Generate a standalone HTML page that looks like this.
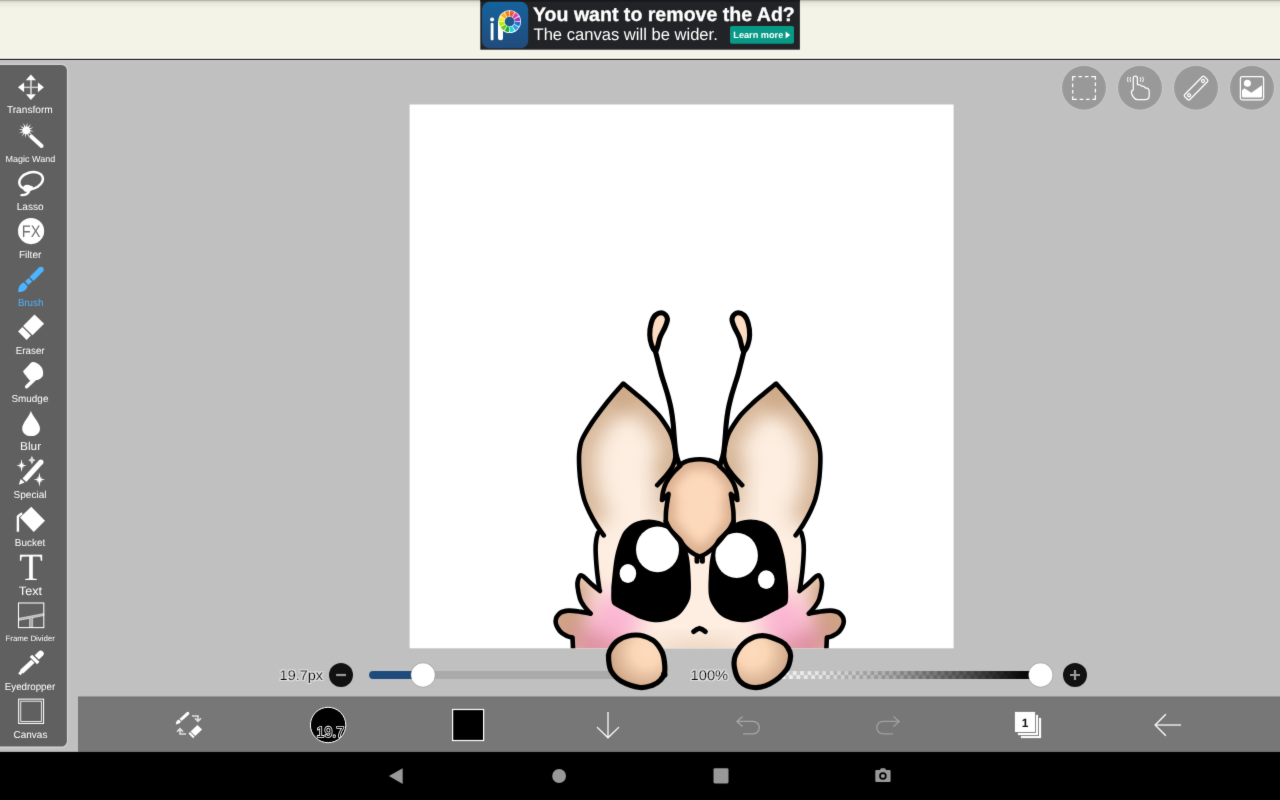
<!DOCTYPE html>
<html lang="en">
<head>
<meta charset="utf-8">
<title>ibisPaint</title>
<style>
*{box-sizing:border-box;margin:0;padding:0}
html,body{width:1280px;height:800px;overflow:hidden;background:#c0c0c0;font-family:"Liberation Sans",sans-serif}
#app{position:relative;width:1280px;height:800px;overflow:hidden;background:#c0c0c0}
#app>svg{position:absolute;left:0;top:0;width:1280px;height:800px;display:block}
text{white-space:pre;text-rendering:geometricPrecision}
</style>
</head>
<body>
<div id="app">
<svg width="1280" height="800" viewBox="0 0 1280 800">
<defs><filter id="soft" filterUnits="userSpaceOnUse" x="0" y="0" width="1280" height="800" color-interpolation-filters="sRGB"><feConvolveMatrix order="3" kernelMatrix="0.01 0.07 0.01 0.07 0.68 0.07 0.01 0.07 0.01" edgeMode="duplicate" preserveAlpha="true"/></filter></defs>
<g filter="url(#soft)">
<!-- workspace -->
<rect width="1280" height="800" fill="#c0c0c0"/>
<!-- canvas -->
<rect x="409.6" y="104.5" width="544" height="543.8" fill="#fff"/>
<!-- sliders -->
<defs><pattern id="chk" x="741" y="671.1" width="7.4" height="8" patternUnits="userSpaceOnUse"><rect width="7.4" height="8" fill="#fff"/><rect x="3.7" width="3.7" height="4" fill="#d6d6d6"/><rect y="4" width="3.7" height="4" fill="#d6d6d6"/></pattern>
<linearGradient id="opg" x1="741" x2="1040" y1="0" y2="0" gradientUnits="userSpaceOnUse"><stop offset="0" stop-color="#000" stop-opacity="0"/><stop offset="0.25" stop-color="#000" stop-opacity=".1"/><stop offset="0.5" stop-color="#000" stop-opacity=".33"/><stop offset="0.75" stop-color="#000" stop-opacity=".66"/><stop offset="0.93" stop-color="#000" stop-opacity=".95"/><stop offset="1" stop-color="#000" stop-opacity="1"/></linearGradient></defs>
<rect x="369.1" y="671.1" width="282" height="8" rx="4" fill="#aaa"/>
<rect x="369.1" y="671.1" width="60" height="8" rx="4" fill="#1f4b7c"/>
<rect x="741" y="671.1" width="310" height="8" rx="4" fill="url(#chk)"/>
<rect x="741" y="671.1" width="310" height="8" rx="4" fill="url(#opg)"/>
<circle cx="341" cy="675" r="12" fill="#111"/><rect x="336.1" y="673.9" width="9.9" height="2.2" fill="#9a9a9a"/>
<circle cx="1075" cy="675" r="12" fill="#111"/><path d="M1070 675H1080M1075 670V680" stroke="#9a9a9a" stroke-width="2.2" fill="none"/>
<circle cx="423" cy="675" r="12.4" fill="#8e8e8e" opacity=".6"/><circle cx="423" cy="675" r="11.8" fill="#fff"/>
<circle cx="1040.6" cy="675" r="12.4" fill="#8e8e8e" opacity=".6"/><circle cx="1040.6" cy="675" r="11.8" fill="#fff"/>
<defs><filter id="halo" x="-10%" y="-30%" width="120%" height="160%"><feMorphology in="SourceAlpha" operator="dilate" radius="0.6" result="d"/><feGaussianBlur in="d" stdDeviation="0.45" result="db"/><feFlood flood-color="#fff" flood-opacity=".55"/><feComposite in2="db" operator="in" result="h"/><feMerge><feMergeNode in="h"/><feMergeNode in="SourceGraphic"/></feMerge></filter></defs>
<g font-family="'Liberation Sans',sans-serif" font-size="14" fill="#000" stroke="#000" stroke-width=".18" filter="url(#halo)">
<text x="279.6" y="679.8" textLength="43.4" lengthAdjust="spacingAndGlyphs">19.7px</text>
<text x="690.6" y="679.8" textLength="37.6" lengthAdjust="spacingAndGlyphs">100%</text>
</g>
<!-- drawing -->
<defs>
<clipPath id="cv"><rect x="409.6" y="104.5" width="544" height="543.8"/></clipPath>
<clipPath id="bodyclip"><path d="M699.7 470L678 468L675.3 457.5L674.4 446.6L671.6 435.6L667.2 427.3L658.4 414.8L647.5 403.9L636.6 394.5L623.3 383.6L612.5 395.8L601.6 409.4L590.6 424.7L581.9 440L579.2 453.1L579.3 468.4L580.8 483.75L584.1 499.1L589.5 512.2L596.1 524.2L597.5 529L596.25 540L595.6 550L596.9 570L599.4 589.5L592 584.5L584 577L580.6 575.3L578 580L577.5 586.25L580 598.75L584 606L590.5 613.6L581.25 611.9L568.75 610.6L560 613.1L555.6 621.25L560 631.25L567.5 636.25L572.5 637.5L573.1 652L699.7 652L826.3 652L826.9 637.5L831.9 636.25L839.4 631.25L843.8 621.25L839.4 613.1L830.65 610.6L818.15 611.9L808.9 613.6L815.4 606L819.4 598.75L821.9 586.25L821.4 580L818.8 575.3L815.4 577L807.4 584.5L800 589.5L802.5 570L803.8 550L803.15 540L801.9 529L803.3 524.2L809.9 512.2L815.3 499.1L818.6 483.75L820.1 468.4L820.2 453.1L817.5 440L808.8 424.7L797.8 409.4L786.9 395.8L776.1 383.6L762.8 394.5L751.9 403.9L741 414.8L732.2 427.3L727.8 435.6L725 446.6L724.1 457.5L721.4 468Z"/></clipPath>
<filter id="b9" x="-30%" y="-30%" width="160%" height="160%"><feGaussianBlur stdDeviation="9.5"/></filter>
<filter id="b5" x="-30%" y="-30%" width="160%" height="160%"><feGaussianBlur stdDeviation="5.5"/></filter>
<filter id="b12" x="-50%" y="-50%" width="200%" height="200%"><feGaussianBlur stdDeviation="11"/></filter>
<linearGradient id="tuftg" x1="664" x2="735.4" y1="0" y2="0" gradientUnits="userSpaceOnUse"><stop offset="0" stop-color="#dfb99b"/><stop offset="0.18" stop-color="#e6c1a4"/><stop offset="0.5" stop-color="#fddabc"/><stop offset="0.82" stop-color="#e6c1a4"/><stop offset="1" stop-color="#dfb99b"/></linearGradient>
<radialGradient id="pawgL" cx="647" cy="652" r="40" gradientUnits="userSpaceOnUse"><stop offset="0" stop-color="#fedbbd"/><stop offset="0.35" stop-color="#fad6b7"/><stop offset="1" stop-color="#c9a282"/></radialGradient>
<radialGradient id="pawgR" cx="752.4" cy="652" r="40" gradientUnits="userSpaceOnUse"><stop offset="0" stop-color="#fedbbd"/><stop offset="0.35" stop-color="#fad6b7"/><stop offset="1" stop-color="#c9a282"/></radialGradient>
</defs>
<g clip-path="url(#cv)">
<path d="M699.7 470L678 468L675.3 457.5L674.4 446.6L671.6 435.6L667.2 427.3L658.4 414.8L647.5 403.9L636.6 394.5L623.3 383.6L612.5 395.8L601.6 409.4L590.6 424.7L581.9 440L579.2 453.1L579.3 468.4L580.8 483.75L584.1 499.1L589.5 512.2L596.1 524.2L597.5 529L596.25 540L595.6 550L596.9 570L599.4 589.5L592 584.5L584 577L580.6 575.3L578 580L577.5 586.25L580 598.75L584 606L590.5 613.6L581.25 611.9L568.75 610.6L560 613.1L555.6 621.25L560 631.25L567.5 636.25L572.5 637.5L573.1 652L699.7 652L826.3 652L826.9 637.5L831.9 636.25L839.4 631.25L843.8 621.25L839.4 613.1L830.65 610.6L818.15 611.9L808.9 613.6L815.4 606L819.4 598.75L821.9 586.25L821.4 580L818.8 575.3L815.4 577L807.4 584.5L800 589.5L802.5 570L803.8 550L803.15 540L801.9 529L803.3 524.2L809.9 512.2L815.3 499.1L818.6 483.75L820.1 468.4L820.2 453.1L817.5 440L808.8 424.7L797.8 409.4L786.9 395.8L776.1 383.6L762.8 394.5L751.9 403.9L741 414.8L732.2 427.3L727.8 435.6L725 446.6L724.1 457.5L721.4 468Z" fill="#fdeee1"/>
<g clip-path="url(#bodyclip)">
<g filter="url(#b9)" fill="none" stroke="#c8a27e" stroke-width="32" stroke-linejoin="round" opacity=".72">
<path d="M662.5 479.6C663.35 478.6 665.9 475.82 667.6 473.6C669.3 471.38 671.42 468.98 672.7 466.3C673.98 463.62 675.02 460.78 675.3 457.5C675.58 454.22 675.02 450.25 674.4 446.6C673.78 442.95 672.8 438.82 671.6 435.6C670.4 432.38 669.4 430.77 667.2 427.3C665 423.83 661.68 418.7 658.4 414.8C655.12 410.9 651.13 407.28 647.5 403.9C643.87 400.52 640.63 397.88 636.6 394.5C632.57 391.12 625.52 385.42 623.3 383.6C621.5 385.63 616.12 391.5 612.5 395.8C608.88 400.1 605.25 404.58 601.6 409.4C597.95 414.22 593.88 419.6 590.6 424.7C587.32 429.8 583.8 435.27 581.9 440C580 444.73 579.63 448.37 579.2 453.1C578.77 457.83 579.03 463.29 579.3 468.4C579.57 473.51 580 478.63 580.8 483.75C581.6 488.87 582.65 494.36 584.1 499.1C585.55 503.84 587.5 508.02 589.5 512.2C591.5 516.38 595 522.2 596.1 524.2"/><path d="M736.9 479.6C736.05 478.6 733.5 475.82 731.8 473.6C730.1 471.38 727.98 468.98 726.7 466.3C725.42 463.62 724.38 460.78 724.1 457.5C723.82 454.22 724.38 450.25 725 446.6C725.62 442.95 726.6 438.82 727.8 435.6C729 432.38 730 430.77 732.2 427.3C734.4 423.83 737.72 418.7 741 414.8C744.28 410.9 748.27 407.28 751.9 403.9C755.53 400.52 758.77 397.88 762.8 394.5C766.83 391.12 773.88 385.42 776.1 383.6C777.9 385.63 783.28 391.5 786.9 395.8C790.52 400.1 794.15 404.58 797.8 409.4C801.45 414.22 805.52 419.6 808.8 424.7C812.08 429.8 815.6 435.27 817.5 440C819.4 444.73 819.77 448.37 820.2 453.1C820.63 457.83 820.37 463.29 820.1 468.4C819.83 473.51 819.4 478.63 818.6 483.75C817.8 488.87 816.75 494.36 815.3 499.1C813.85 503.84 811.9 508.02 809.9 512.2C807.9 516.38 804.4 522.2 803.3 524.2"/>
</g>
<g filter="url(#b9)" fill="#c8a27e" opacity=".7">
<ellipse cx="623.3" cy="390" rx="17" ry="24"/><ellipse cx="776.1" cy="390" rx="17" ry="24"/>
</g>
<path d="M680 466L670 477L664 488L663 500L666 512L666 523M719.4 466L729.4 477L735.4 488L736.4 500L733.4 512L733.4 523" fill="none" stroke="#c8a27e" stroke-width="20" opacity=".55" filter="url(#b9)"/>
<g filter="url(#b9)" fill="#cfa385">
<ellipse cx="566" cy="619" rx="27" ry="36"/><ellipse cx="833.4" cy="619" rx="27" ry="36"/>
<ellipse cx="581" cy="590" rx="11" ry="19"/><ellipse cx="818.4" cy="590" rx="11" ry="19"/>
</g>
<ellipse cx="699.7" cy="652" rx="46" ry="14" fill="#d9b596" opacity=".4" filter="url(#b9)"/>
<g filter="url(#b12)">
<ellipse cx="600" cy="644" rx="30" ry="21" fill="#d88896"/><ellipse cx="799.4" cy="644" rx="30" ry="21" fill="#d88896"/>
<ellipse cx="616" cy="617" rx="27" ry="25" fill="#fbb6d2"/><ellipse cx="783.4" cy="617" rx="27" ry="25" fill="#fbb6d2"/>
</g>
</g>
<clipPath id="tuftclip"><path d="M699.7 459.2L690 460.3L684 462.3L679.6 465.2L672 474L666 483L663.5 492L664 498L667.2 502.5L666 512L665.8 522.5L669.3 528L677.3 538L685.5 547.3L693 553.4L699.7 556.6L706.4 553.4L713.9 547.3L722.1 538L730.1 528L733.6 522.5L733.4 512L732.2 502.5L735.4 498L735.9 492L733.4 483L727.4 474L719.8 465.2L715.4 462.3L709.4 460.3Z"/></clipPath>
<path d="M699.7 459.2L690 460.3L684 462.3L679.6 465.2L672 474L666 483L663.5 492L664 498L667.2 502.5L666 512L665.8 522.5L669.3 528L677.3 538L685.5 547.3L693 553.4L699.7 556.6L706.4 553.4L713.9 547.3L722.1 538L730.1 528L733.6 522.5L733.4 512L732.2 502.5L735.4 498L735.9 492L733.4 483L727.4 474L719.8 465.2L715.4 462.3L709.4 460.3Z" fill="#fdd9bb"/>
<g clip-path="url(#tuftclip)"><path d="M699.7 459.2L690 460.3L684 462.3L679.6 465.2L672 474L666 483L663.5 492L664 498L667.2 502.5L666 512L665.8 522.5L669.3 528L677.3 538L685.5 547.3L693 553.4L699.7 556.6L706.4 553.4L713.9 547.3L722.1 538L730.1 528L733.6 522.5L733.4 512L732.2 502.5L735.4 498L735.9 492L733.4 483L727.4 474L719.8 465.2L715.4 462.3L709.4 460.3Z" fill="none" stroke="#d0a585" stroke-width="19" stroke-linejoin="round" filter="url(#b5)" opacity=".8"/></g>
<path d="M663.1 313.1C665.07 313.73 667.08 316.39 667.4 318.75C667.72 321.11 666.23 324.12 665 327.25C663.77 330.38 661.25 334.23 660 337.5C658.75 340.77 658.27 344.65 657.5 346.9C656.73 349.15 656.38 351.32 655.4 351C654.42 350.68 652.54 347.67 651.6 345C650.66 342.33 649.81 338.65 649.75 335C649.69 331.35 650.27 326.43 651.25 323.1C652.23 319.77 653.62 316.67 655.6 315C657.58 313.33 661.13 312.48 663.1 313.1Z" fill="#fddcc1"/>
<path d="M736.3 313.1C734.33 313.73 732.32 316.39 732 318.75C731.68 321.11 733.17 324.12 734.4 327.25C735.63 330.38 738.15 334.23 739.4 337.5C740.65 340.77 741.13 344.65 741.9 346.9C742.67 349.15 743.02 351.32 744 351C744.98 350.68 746.86 347.67 747.8 345C748.74 342.33 749.59 338.65 749.65 335C749.71 331.35 749.13 326.43 748.15 323.1C747.18 319.77 745.78 316.67 743.8 315C741.83 313.33 738.27 312.48 736.3 313.1Z" fill="#fddcc1"/>
<path d="M648.75 519.4C652.42 519.32 655.88 520.07 659 521C662.12 521.93 664.67 523.08 667.5 525C670.33 526.92 673.29 529.79 676 532.5C678.71 535.21 681.62 537.29 683.75 541.25C685.88 545.21 687.61 550.62 688.75 556.25C689.89 561.88 690.29 568.54 690.6 575C690.91 581.46 691.33 589.79 690.6 595C689.88 600.21 688.43 602.71 686.25 606.25C684.07 609.79 681.04 613.75 677.5 616.25C673.96 618.75 669.17 620.31 665 621.25C660.83 622.19 656.67 622.32 652.5 621.9C648.33 621.48 644.17 620.32 640 618.75C635.83 617.18 631.67 614.62 627.5 612.5C623.33 610.38 617.65 607.83 615 606C612.35 604.17 612.22 604.17 611.6 601.5C610.98 598.83 611.25 593.38 611.3 590C611.35 586.62 611.28 586.88 611.9 581.25C612.52 575.62 613.44 563.75 615 556.25C616.56 548.75 619.08 541.12 621.25 536.25C623.42 531.38 625.38 529.46 628 527C630.62 524.54 633.54 522.77 637 521.5C640.46 520.23 645.08 519.48 648.75 519.4Z" fill="#000"/>
<path d="M750.65 519.4C746.98 519.32 743.53 520.07 740.4 521C737.28 521.93 734.73 523.08 731.9 525C729.07 526.92 726.11 529.79 723.4 532.5C720.69 535.21 717.78 537.29 715.65 541.25C713.53 545.21 711.79 550.62 710.65 556.25C709.51 561.88 709.11 568.54 708.8 575C708.49 581.46 708.08 589.79 708.8 595C709.53 600.21 710.97 602.71 713.15 606.25C715.33 609.79 718.36 613.75 721.9 616.25C725.44 618.75 730.23 620.31 734.4 621.25C738.57 622.19 742.73 622.32 746.9 621.9C751.07 621.48 755.23 620.32 759.4 618.75C763.57 617.18 767.73 614.62 771.9 612.5C776.07 610.38 781.75 607.83 784.4 606C787.05 604.17 787.18 604.17 787.8 601.5C788.42 598.83 788.15 593.38 788.1 590C788.05 586.62 788.12 586.88 787.5 581.25C786.88 575.62 785.96 563.75 784.4 556.25C782.84 548.75 780.32 541.12 778.15 536.25C775.98 531.38 774.03 529.46 771.4 527C768.78 524.54 765.86 522.77 762.4 521.5C758.94 520.23 754.32 519.48 750.65 519.4Z" fill="#000"/>
<ellipse cx="657.5" cy="549.4" rx="21.5" ry="22.9" fill="#fff"/>
<ellipse cx="627.9" cy="573.5" rx="8.3" ry="9.4" fill="#fff"/>
<ellipse cx="736.6" cy="555.4" rx="21.3" ry="22.7" fill="#fff"/>
<ellipse cx="766.25" cy="579.6" rx="8.4" ry="9.3" fill="#fff"/>
<g fill="none" stroke="#000" stroke-width="4.6" stroke-linecap="round" stroke-linejoin="round">
<path d="M657.2 485.2C658.08 484.27 660.77 481.53 662.5 479.6C664.23 477.67 665.9 475.82 667.6 473.6C669.3 471.38 671.42 468.98 672.7 466.3C673.98 463.62 675.02 460.78 675.3 457.5C675.58 454.22 675.02 450.25 674.4 446.6C673.78 442.95 672.8 438.82 671.6 435.6C670.4 432.38 669.4 430.77 667.2 427.3C665 423.83 661.68 418.7 658.4 414.8C655.12 410.9 651.13 407.28 647.5 403.9C643.87 400.52 640.63 397.88 636.6 394.5C632.57 391.12 625.52 385.42 623.3 383.6C621.5 385.63 616.12 391.5 612.5 395.8C608.88 400.1 605.25 404.58 601.6 409.4C597.95 414.22 593.88 419.6 590.6 424.7C587.32 429.8 583.8 435.27 581.9 440C580 444.73 579.63 448.37 579.2 453.1C578.77 457.83 579.03 463.29 579.3 468.4C579.57 473.51 580 478.63 580.8 483.75C581.6 488.87 582.65 494.36 584.1 499.1C585.55 503.84 587.5 508.02 589.5 512.2C591.5 516.38 593.73 520.33 596.1 524.2C598.48 528.07 602.48 533.53 603.75 535.4"/>
<path d="M598.1 532.5C597.79 533.75 596.67 537.08 596.25 540C595.83 542.92 595.49 545 595.6 550C595.71 555 596.27 563.42 596.9 570C597.53 576.58 598.98 586.25 599.4 589.5"/>
<path d="M600 591C598.67 589.92 594.67 586.83 592 584.5C589.33 582.17 585.9 578.53 584 577C582.1 575.47 581.6 574.8 580.6 575.3C579.6 575.8 578.52 578.17 578 580C577.48 581.83 577.17 583.12 577.5 586.25C577.83 589.38 578.92 595.46 580 598.75C581.08 602.04 582.25 603.52 584 606C585.75 608.48 589.42 612.33 590.5 613.6"/>
<path d="M590.5 613.6C588.96 613.32 584.88 612.4 581.25 611.9C577.62 611.4 572.29 610.4 568.75 610.6C565.21 610.8 562.19 611.33 560 613.1C557.81 614.88 555.6 618.23 555.6 621.25C555.6 624.27 558.02 628.75 560 631.25C561.98 633.75 565.42 635.21 567.5 636.25C569.58 637.29 571.67 637.29 572.5 637.5L573.1 650"/>
<path d="M680.3 465.8C678.92 467.17 674.38 471.13 672 474C669.62 476.87 667.5 480 666 483C664.5 486 663.67 489.17 663 492C662.33 494.83 662.17 498.67 662 500L668.6 494C668.37 495.42 667.63 499.5 667.2 502.5C666.77 505.5 666.23 508.67 666 512C665.77 515.33 665.83 520.75 665.8 522.5"/>
<path d="M665.8 521C666.38 522.17 667.38 525.17 669.3 528C671.22 530.83 674.6 534.78 677.3 538C680 541.22 682.88 544.73 685.5 547.3C688.12 549.87 690.63 551.85 693 553.4C695.37 554.95 698.58 556.07 699.7 556.6"/>
<path d="M655.4 351.25C655.9 353.21 657.38 359.04 658.4 363C659.42 366.96 660.4 371.17 661.5 375C662.6 378.83 663.87 382.33 665 386C666.13 389.67 667.25 393 668.3 397C669.35 401 670.48 405.5 671.3 410C672.12 414.5 672.7 419.33 673.2 424C673.7 428.67 673.85 433.15 674.3 438C674.75 442.85 675.08 448.68 675.9 453.1C676.72 457.52 678.65 462.6 679.2 464.5" stroke-width="5.1"/>
<path d="M663.1 313.1C665.07 313.73 667.08 316.39 667.4 318.75C667.72 321.11 666.23 324.12 665 327.25C663.77 330.38 661.25 334.23 660 337.5C658.75 340.77 658.27 344.65 657.5 346.9C656.73 349.15 656.38 351.32 655.4 351C654.42 350.68 652.54 347.67 651.6 345C650.66 342.33 649.81 338.65 649.75 335C649.69 331.35 650.27 326.43 651.25 323.1C652.23 319.77 653.62 316.67 655.6 315C657.58 313.33 661.13 312.48 663.1 313.1Z" stroke-width="5.1"/>
<path d="M742.2 485.2C741.32 484.27 738.63 481.53 736.9 479.6C735.17 477.67 733.5 475.82 731.8 473.6C730.1 471.38 727.98 468.98 726.7 466.3C725.42 463.62 724.38 460.78 724.1 457.5C723.82 454.22 724.38 450.25 725 446.6C725.62 442.95 726.6 438.82 727.8 435.6C729 432.38 730 430.77 732.2 427.3C734.4 423.83 737.72 418.7 741 414.8C744.28 410.9 748.27 407.28 751.9 403.9C755.53 400.52 758.77 397.88 762.8 394.5C766.83 391.12 773.88 385.42 776.1 383.6C777.9 385.63 783.28 391.5 786.9 395.8C790.52 400.1 794.15 404.58 797.8 409.4C801.45 414.22 805.52 419.6 808.8 424.7C812.08 429.8 815.6 435.27 817.5 440C819.4 444.73 819.77 448.37 820.2 453.1C820.63 457.83 820.37 463.29 820.1 468.4C819.83 473.51 819.4 478.63 818.6 483.75C817.8 488.87 816.75 494.36 815.3 499.1C813.85 503.84 811.9 508.02 809.9 512.2C807.9 516.38 805.68 520.33 803.3 524.2C800.93 528.07 796.93 533.53 795.65 535.4"/>
<path d="M801.3 532.5C801.61 533.75 802.73 537.08 803.15 540C803.57 542.92 803.91 545 803.8 550C803.69 555 803.13 563.42 802.5 570C801.87 576.58 800.42 586.25 800 589.5"/>
<path d="M799.4 591C800.73 589.92 804.73 586.83 807.4 584.5C810.07 582.17 813.5 578.53 815.4 577C817.3 575.47 817.8 574.8 818.8 575.3C819.8 575.8 820.88 578.17 821.4 580C821.92 581.83 822.23 583.12 821.9 586.25C821.57 589.38 820.48 595.46 819.4 598.75C818.32 602.04 817.15 603.52 815.4 606C813.65 608.48 809.98 612.33 808.9 613.6"/>
<path d="M808.9 613.6C810.44 613.32 814.53 612.4 818.15 611.9C821.78 611.4 827.11 610.4 830.65 610.6C834.19 610.8 837.21 611.33 839.4 613.1C841.59 614.88 843.8 618.23 843.8 621.25C843.8 624.27 841.38 628.75 839.4 631.25C837.42 633.75 833.98 635.21 831.9 636.25C829.82 637.29 827.73 637.29 826.9 637.5L826.3 650"/>
<path d="M719.1 465.8C720.48 467.17 725.02 471.13 727.4 474C729.78 476.87 731.9 480 733.4 483C734.9 486 735.73 489.17 736.4 492C737.07 494.83 737.23 498.67 737.4 500L730.8 494C731.03 495.42 731.77 499.5 732.2 502.5C732.63 505.5 733.17 508.67 733.4 512C733.63 515.33 733.57 520.75 733.6 522.5"/>
<path d="M733.6 521C733.02 522.17 732.02 525.17 730.1 528C728.18 530.83 724.8 534.78 722.1 538C719.4 541.22 716.52 544.73 713.9 547.3C711.28 549.87 708.77 551.85 706.4 553.4C704.03 554.95 700.82 556.07 699.7 556.6"/>
<path d="M744 351.25C743.5 353.21 742.02 359.04 741 363C739.98 366.96 739 371.17 737.9 375C736.8 378.83 735.53 382.33 734.4 386C733.27 389.67 732.15 393 731.1 397C730.05 401 728.92 405.5 728.1 410C727.28 414.5 726.7 419.33 726.2 424C725.7 428.67 725.55 433.15 725.1 438C724.65 442.85 724.32 448.68 723.5 453.1C722.68 457.52 720.75 462.6 720.2 464.5" stroke-width="5.1"/>
<path d="M736.3 313.1C734.33 313.73 732.32 316.39 732 318.75C731.68 321.11 733.17 324.12 734.4 327.25C735.63 330.38 738.15 334.23 739.4 337.5C740.65 340.77 741.13 344.65 741.9 346.9C742.67 349.15 743.02 351.32 744 351C744.98 350.68 746.86 347.67 747.8 345C748.74 342.33 749.59 338.65 749.65 335C749.71 331.35 749.13 326.43 748.15 323.1C747.18 319.77 745.78 316.67 743.8 315C741.83 313.33 738.27 312.48 736.3 313.1Z" stroke-width="5.1"/>
<path d="M679.6 465.2C680.33 464.72 682.27 463.12 684 462.3C685.73 461.48 687.38 460.82 690 460.3C692.62 459.78 696.47 459.2 699.7 459.2C702.93 459.2 706.78 459.78 709.4 460.3C712.02 460.82 713.67 461.48 715.4 462.3C717.13 463.12 719.07 464.72 719.8 465.2"/>
<path d="M697 557.5V561.2M702.4 557.5V561.2" stroke-width="5"/>
<path d="M693.6 631.6Q696.6 628.9 699.5 628.3Q702.4 628.9 705.4 631.6" stroke-width="4.9"/>
</g>
</g>
<path d="M636.25 635C641.88 635 648.46 637.67 652.5 640C656.54 642.33 658.62 646.08 660.5 649C662.38 651.92 663.07 653.58 663.75 657.5C664.43 661.42 665.23 668.67 664.6 672.5C663.98 676.33 662.02 678.37 660 680.5C657.98 682.63 655.83 684.13 652.5 685.3C649.17 686.47 645.21 688.17 640 687.5C634.79 686.83 626 683.92 621.25 681.25C616.5 678.58 613.58 674.88 611.5 671.5C609.42 668.12 609.08 664.38 608.75 661C608.42 657.62 607.83 654.75 609.5 651.25C611.17 647.75 614.29 642.71 618.75 640C623.21 637.29 630.62 635 636.25 635Z" fill="url(#pawgL)" stroke="#000" stroke-width="5.2" stroke-linejoin="round"/>
<path d="M762.5 635.6C756.67 635.56 750.73 638.02 746.25 641.25C741.77 644.48 737.58 650.62 735.6 655C733.62 659.38 733.67 663.12 734.4 667.5C735.13 671.88 736.77 677.92 740 681.25C743.23 684.58 748.75 687.08 753.75 687.5C758.75 687.92 764.58 686.67 770 683.75C775.42 680.83 782.82 674.58 786.25 670C789.68 665.42 790.31 659.92 790.6 656.25C790.89 652.58 789.56 650.46 788 648C786.44 645.54 785.5 643.57 781.25 641.5C777 639.43 768.33 635.64 762.5 635.6Z" fill="url(#pawgR)" stroke="#000" stroke-width="5.2" stroke-linejoin="round"/>
<circle cx="664.3" cy="674.5" r="3.2" fill="#000"/>
<!-- ad banner -->
<rect x="0" y="0" width="1280" height="58" fill="#f3f3e7"/>
<rect x="0" y="57.6" width="1280" height="1.3" fill="#fffff6"/>
<rect x="0" y="58.85" width="1280" height="1.2" fill="#1c1c1c"/>
<rect x="0" y="60" width="1280" height="1" fill="#c9c9c9"/>
<defs><linearGradient id="adsh" x1="0" x2="0" y1="0" y2="1"><stop offset="0" stop-color="#9a9a93"/><stop offset="0.14" stop-color="#d4d4c9"/><stop offset="0.4" stop-color="#e7e7db"/><stop offset="1" stop-color="#f3f3e7"/></linearGradient>
<linearGradient id="lg" x1="0" x2="0" y1="0" y2="1"><stop offset="0" stop-color="#15629c"/><stop offset="1" stop-color="#214b7c"/></linearGradient></defs>
<rect x="0" y="0" width="1280" height="8" fill="url(#adsh)"/>
<rect x="480.3" y="0" width="319.6" height="49.7" fill="#222326"/>
<rect x="480.3" y="0" width="319.6" height="1.6" fill="#17181a"/>
<rect x="482" y="1.8" width="46.2" height="46.5" rx="7.5" fill="url(#lg)"/>
<circle cx="492.1" cy="19.5" r="2" fill="#fff"/><rect x="490.7" y="23.1" width="2.8" height="17.2" rx=".8" fill="#fff"/>
<path d="M498 22V37.8A2.5 2.5 0 0 0 503 37.8V22Z" fill="#fff"/>
<circle cx="509.6" cy="21.6" r="11.4" fill="#fff"/>
<path d="M509.83 16.31L510.07 10.91A10.7 10.7 0 0 1 514.54 12.11L512.05 16.9A5.3 5.3 0 0 0 509.83 16.31Z" fill="#ea5a2a"/>
<path d="M512.45 17.13L515.35 12.58A10.7 10.7 0 0 1 518.62 15.85L514.07 18.75A5.3 5.3 0 0 0 512.45 17.13Z" fill="#e43fa6"/>
<path d="M514.3 19.15L519.09 16.66A10.7 10.7 0 0 1 520.29 21.13L514.89 21.37A5.3 5.3 0 0 0 514.3 19.15Z" fill="#a334bd"/>
<path d="M514.89 21.83L520.29 22.07A10.7 10.7 0 0 1 519.09 26.54L514.3 24.05A5.3 5.3 0 0 0 514.89 21.83Z" fill="#1f72cc"/>
<path d="M514.07 24.45L518.62 27.35A10.7 10.7 0 0 1 515.35 30.62L512.45 26.07A5.3 5.3 0 0 0 514.07 24.45Z" fill="#2d9ae6"/>
<path d="M512.05 26.3L514.54 31.09A10.7 10.7 0 0 1 510.07 32.29L509.83 26.89A5.3 5.3 0 0 0 512.05 26.3Z" fill="#22d3da"/>
<path d="M509.37 26.89L509.13 32.29A10.7 10.7 0 0 1 504.66 31.09L507.15 26.3A5.3 5.3 0 0 0 509.37 26.89Z" fill="#17b02a"/>
<path d="M506.75 26.07L503.85 30.62A10.7 10.7 0 0 1 500.58 27.35L505.13 24.45A5.3 5.3 0 0 0 506.75 26.07Z" fill="#79c81f"/>
<path d="M504.9 24.05L500.11 26.54A10.7 10.7 0 0 1 498.91 22.07L504.31 21.83A5.3 5.3 0 0 0 504.9 24.05Z" fill="#b5f011"/>
<path d="M504.31 21.37L498.91 21.13A10.7 10.7 0 0 1 500.11 16.66L504.9 19.15A5.3 5.3 0 0 0 504.31 21.37Z" fill="#f2f01e"/>
<path d="M505.13 18.75L500.58 15.85A10.7 10.7 0 0 1 503.85 12.58L506.75 17.13A5.3 5.3 0 0 0 505.13 18.75Z" fill="#f7b31f"/>
<path d="M507.15 16.9L504.66 12.11A10.7 10.7 0 0 1 509.13 10.91L509.37 16.31A5.3 5.3 0 0 0 507.15 16.9Z" fill="#f07f19"/>
<circle cx="509.6" cy="21.6" r="4.9" fill="#1d5a90"/>
<g font-family="'Liberation Sans',sans-serif" fill="#fff">
<text x="533" y="21.1" font-size="19.8" font-weight="bold" textLength="261.8" lengthAdjust="spacingAndGlyphs" stroke="#fff" stroke-width=".3">You want to remove the Ad?</text>
<text x="533.5" y="40.3" font-size="16.8" textLength="184.3" lengthAdjust="spacingAndGlyphs">The canvas will be wider.</text>
<rect x="730" y="26" width="64" height="17.8" rx="2" fill="#089a87"/>
<text x="733.3" y="38.2" font-size="9.2" font-weight="bold" textLength="50" lengthAdjust="spacingAndGlyphs">Learn more</text>
<path d="M785.6 31.6L790.2 35L785.6 38.4Z"/>
</g>
<!-- tool palette -->
<path d="M-2 63.8H61.8A6.3 6.3 0 0 1 68.1 70.1V741.6A6.3 6.3 0 0 1 61.8 747.9H-2Z" fill="#d2d2d2"/>
<path d="M-2 65H61.6A5.3 5.3 0 0 1 66.9 70.3V741.3A5.3 5.3 0 0 1 61.6 746.6H-2Z" fill="#606060"/>
<g fill="#fff">
<path d="M30.9 74.6L25.8 80.2H36ZM30.9 99.9L26 94.3H35.9ZM18 87.3L24.1 82.4V92.3ZM43.9 87.3L37.9 82.4V92.3Z"/>
<path d="M30.1 80H31.9V94.5H30.1Z" fill="#cfcfcf"/><path d="M24 86.6H38V88.1H24Z" fill="#cfcfcf"/>
<path d="M27.26 122.57L27.4 127.53L30.99 124.11L28.63 128.47L33.45 127.31L29.22 129.91L33.98 131.31L29.02 131.45L32.44 135.04L28.08 132.68L29.24 137.5L26.64 133.27L25.24 138.03L25.1 133.07L21.51 136.49L23.87 132.13L19.05 133.29L23.28 130.69L18.52 129.29L23.48 129.15L20.06 125.56L24.42 127.92L23.26 123.1L25.86 127.33Z"/>
<circle cx="26.25" cy="130.3" r="3.6"/>
<path d="M31.2 136.6L41.6 146" stroke="#fff" stroke-width="4" stroke-linecap="round" fill="none"/>
<ellipse cx="31.1" cy="180.7" rx="12.1" ry="8.3" transform="rotate(-17 31.1 180.7)" fill="none" stroke="#fff" stroke-width="2.4"/>
<ellipse cx="27.3" cy="188.3" rx="4.2" ry="3.6"/><circle cx="30.9" cy="188" r="2.2"/>
<path d="M29.6 189.5Q28.6 195.2 21.4 195.2" fill="none" stroke="#fff" stroke-width="2.2" stroke-linecap="round"/>
<circle cx="31.06" cy="231.1" r="13.1"/>
<path d="M34.5 314.6L44.1 323.7L32.5 335.25L23.1 325.9Z"/>
<path d="M22.4 327.1L30.9 335.6L26.6 340.1L18.1 331.6Z"/>
<path d="M32.5 362C35 361.69 37.5 363.25 40 365.44C42.5 367.62 43.25 370.75 43.12 373.88C43 377 40 379.5 36.25 380.12L27.81 388.12C26.88 388.88 25.31 388.56 25 387.31C24.75 386.38 25.31 385.75 25.94 385.12L30.44 380.62C29.38 380.25 28.44 379.5 28.12 378.25C27.19 377.94 26.38 377 26.25 375.62C25 375.12 24.25 374.19 24.25 372.94C23.44 372.5 23 371.69 23.25 370.88L27.81 366.25C29.38 364.5 30.94 362.31 32.5 362Z"/>
<path d="M30.9 410.7C32.2 416 40 423 40 428.4C40 433 36.2 436.1 31.1 436.1C26 436.1 22.2 433 22.2 428.4C22.2 423 29.8 416 30.9 410.7Z"/>
<path d="M24.4 480.2L40.7 462.3" stroke="#fff" stroke-width="5.2" stroke-linecap="butt" fill="none"/>
<circle cx="40.9" cy="462.1" r="2.6"/>
<path d="M18.75 484.8L20.7 478.9L24.7 482.6Z"/>
<path d="M21.56 459.1L22.62 464.44L26.56 465.5L22.62 466.56L21.56 471.9L20.5 466.56L16.56 465.5L20.5 464.44Z"/>
<path d="M23.89 463.17L22.76 465.5L23.89 467.83L21.56 466.7L19.23 467.83L20.36 465.5L19.23 463.17L21.56 464.3Z" opacity=".9"/>
<path d="M31.9 455.8L33.24 458.86L35.5 460.2L33.24 461.54L31.9 464.6L30.56 461.54L28.3 460.2L30.56 458.86Z" opacity=".8"/>
<path d="M39.4 472.4L40.53 478.47L45 479.6L40.53 480.73L39.4 486.8L38.27 480.73L33.8 479.6L38.27 478.47Z"/>
<path d="M41.95 477.05L40.7 479.6L41.95 482.15L39.4 480.9L36.85 482.15L38.1 479.6L36.85 477.05L39.4 478.3Z" opacity=".9"/>
<path d="M31.25 506.75L45 520.7L33.75 531.9L20 517.6Z"/>
<path d="M22.1 513.3L17.9 516.4V531.7" fill="none" stroke="#fff" stroke-width="2.4" stroke-linejoin="round"/>
<path d="M18.5 618.4L43.8 613.6V615.6L18.5 620.4Z" fill="#b4b4b4" stroke="#fff" stroke-width=".55"/>
<path d="M29.5 617.6H32.7V627.6H29.5Z" fill="#adadad"/><path d="M29.5 617.6V627.6M32.7 617V627.6" stroke="#fff" stroke-width=".45" fill="none"/>
<rect x="18.5" y="603" width="25.3" height="24.6" fill="none" stroke="#fff" stroke-width="1.05"/>
<path d="M37.1 657.2L40.7 653.6" stroke="#fff" stroke-width="6" stroke-linecap="round" fill="none"/>
<path d="M33.6 660.6L21.6 671.8" stroke="#fff" stroke-width="4.7" fill="none"/>
<path d="M21.9 671.3L19.4 674.4" stroke="#fff" stroke-width="3.1" fill="none"/>
<path d="M30.6 655.2L38.9 663.3" stroke="#606060" stroke-width="5.4" fill="none"/>
<path d="M30.9 655.9L38.3 663" stroke="#fff" stroke-width="3.3" fill="none"/>
<rect x="18.65" y="699.15" width="24.9" height="24.3" fill="none" stroke="#fff" stroke-width="1.05"/>
<rect x="20.75" y="701.2" width="20.6" height="20.3" fill="none" stroke="#fff" stroke-width=".85"/>
</g>
<g fill="#4db4ff">
<path d="M31.6 279L40.8 269.6" stroke="#4db4ff" stroke-width="5.6" stroke-linecap="butt" fill="none"/><circle cx="40.9" cy="269.5" r="2.8"/>
<path d="M25 281.3L28.75 277.9L32.2 281.6L28.4 285.1Z"/>
<path d="M23.9 282.6C20.5 283.4 18.4 286.5 18.1 292C22.5 292.2 26.2 290.6 27.6 286.2Z"/>
</g>
<g font-family="'Liberation Sans',sans-serif">
<text x="31.1" y="237.1" font-size="16.6" text-anchor="middle" fill="#6e6e6e" textLength="18.6" lengthAdjust="spacingAndGlyphs">FX</text>
<text x="6.9" y="113.4" font-size="10.1" textLength="45.9" lengthAdjust="spacingAndGlyphs" fill="#fff">Transform</text>
<text x="5.6" y="161.5" font-size="8.9" textLength="49.6" lengthAdjust="spacingAndGlyphs" fill="#fff">Magic Wand</text>
<text x="16.7" y="209.6" font-size="10.1" textLength="26.9" lengthAdjust="spacingAndGlyphs" fill="#fff">Lasso</text>
<text x="18.9" y="257.5" font-size="10.1" textLength="22.6" lengthAdjust="spacingAndGlyphs" fill="#fff">Filter</text>
<text x="17.9" y="305.5" font-size="10.1" textLength="25.4" lengthAdjust="spacingAndGlyphs" fill="#4db4ff">Brush</text>
<text x="15.8" y="353.6" font-size="10.1" textLength="28.8" lengthAdjust="spacingAndGlyphs" fill="#fff">Eraser</text>
<text x="11.5" y="401.5" font-size="10.1" textLength="36.9" lengthAdjust="spacingAndGlyphs" fill="#fff">Smudge</text>
<text x="20" y="450.2" font-size="11.3" textLength="21.1" lengthAdjust="spacingAndGlyphs" fill="#fff">Blur</text>
<text x="13.6" y="497.6" font-size="10.1" textLength="32.9" lengthAdjust="spacingAndGlyphs" fill="#fff">Special</text>
<text x="14.8" y="545.6" font-size="10.1" textLength="30.4" lengthAdjust="spacingAndGlyphs" fill="#fff">Bucket</text>
<text x="18.8" y="594.5" font-size="12.1" textLength="23.3" lengthAdjust="spacingAndGlyphs" fill="#fff">Text</text>
<text x="5.5" y="641.4" font-size="7.8" textLength="49.4" lengthAdjust="spacingAndGlyphs" fill="#fff">Frame Divider</text>
<text x="4.8" y="689.6" font-size="10.1" textLength="50.4" lengthAdjust="spacingAndGlyphs" fill="#fff">Eyedropper</text>
<text x="13.5" y="737.8" font-size="10.1" textLength="33.9" lengthAdjust="spacingAndGlyphs" fill="#fff">Canvas</text>
</g>
<text x="31.1" y="580" font-family="'Liberation Serif',serif" font-size="38.5" text-anchor="middle" fill="#fff">T</text>
<!-- quick buttons -->
<circle cx="1084" cy="87.75" r="22.7" fill="#cbcbcb"/><circle cx="1084" cy="87.75" r="21.95" fill="#999"/>
<circle cx="1140" cy="87.75" r="22.7" fill="#cbcbcb"/><circle cx="1140" cy="87.75" r="21.95" fill="#999"/>
<circle cx="1196" cy="87.75" r="22.7" fill="#cbcbcb"/><circle cx="1196" cy="87.75" r="21.95" fill="#999"/>
<circle cx="1252" cy="87.75" r="22.7" fill="#cbcbcb"/><circle cx="1252" cy="87.75" r="21.95" fill="#999"/>
<g fill="none" stroke="#fff" stroke-width="1.25">
<path d="M1072.1000000000001 76.7H1096.0M1095.4 76.10000000000001V99.89999999999999M1096.0 99.3H1072.1000000000001M1072.7 99.89999999999999V76.10000000000001" stroke-dasharray="3.6 2.77"/>
<path d="M1133.3 90.2V78.2A2.05 2.05 0 0 1 1137.4 78.2V84.6C1139.5 84.4 1141 84.8 1141.6 86.2C1143.4 86 1144.6 86.6 1145.2 87.9C1147.6 87.8 1149.2 89 1149.2 91.2V95.4C1149.2 98 1147.4 99.6 1145 99.6H1137.6C1135.6 99.6 1134.4 98.8 1133.4 97.2C1132.2 95.2 1131.4 93.6 1131.4 92.4C1131.4 91 1132.4 90.2 1133.3 90.2" stroke-linejoin="round"/>
<path d="M1130.6 77.2Q1129.4 79.4 1130.6 81.8M1128.2 76.8Q1126.6 79.4 1128.2 82.2M1140.2 77.2Q1141.4 79.4 1140.2 81.8M1142.6 76.8Q1144.2 79.4 1142.6 82.2" stroke-width="1"/>
<g transform="rotate(-45.4 1196.05 88.1)"><rect x="1182" y="84.5" width="28.1" height="7.2" rx="1.6"/><circle cx="1186.1" cy="88.1" r="1.5"/><circle cx="1206" cy="88.1" r="1.5"/></g>
<rect x="1240.4" y="76.6" width="23.2" height="23.2" rx="1.8"/>
</g>
<circle cx="1247.4" cy="83.25" r="3.5" fill="#fff"/>
<path d="M1242 90.2L1244.4 88.2L1251.4 92.7L1262 85.2V96.3A1.2 1.2 0 0 1 1260.8 97.5H1243.2A1.2 1.2 0 0 1 1242 96.3Z" fill="#fff"/>
<!-- bottom bar -->
<rect x="0" y="751" width="1280" height="1" fill="#d4d4d4"/>
<rect x="78" y="696.7" width="1203" height="54.7" fill="#777"/>
<rect x="78" y="696.7" width="1203" height="1" fill="#707070"/>
<rect x="78.2" y="751" width="1203" height="1" fill="#8a8a8a"/>
<rect x="0" y="751.8" width="1280" height="48.2" fill="#000"/>
<g fill="#fff">
<path d="M183.2 717.6L187.8 713.3" stroke="#fff" stroke-width="3" stroke-linecap="round" fill="none"/>
<path d="M179.6 718.7L181.6 716.9L183.6 719L181.6 720.9Z"/>
<path d="M178.9 719.6C176.9 720.2 175.9 722 175.8 724.4C178.2 724.4 180.2 723.4 180.9 721.6Z"/>
<path d="M197.4 725L202.1 729.5L195.2 736.1L190.6 731.5Z"/><path d="M190 732.1L194.6 736.7L193.1 738.2L188.5 733.6Z"/>
<path d="M192 716H198V720.8M195 718.2L198 721.3L201 718.2" fill="none" stroke="#e2e2e2" stroke-width="1.5"/>
<path d="M186 734H180V729.2M177 731.8L180 728.7L183 731.8" fill="none" stroke="#e2e2e2" stroke-width="1.5"/>
</g>
<circle cx="328.1" cy="725" r="17.7" fill="#000" stroke="#fff" stroke-width="1"/>
<text x="316.6" y="737.4" font-family="'Liberation Sans',sans-serif" font-size="14.8" textLength="27.6" lengthAdjust="spacingAndGlyphs" fill="#000" stroke="#fff" stroke-width="1.6" paint-order="stroke" stroke-linejoin="round">19.7</text>
<rect x="452.6" y="709.5" width="31" height="31" fill="#000" stroke="#fff" stroke-width="1.2"/>
<path d="M608 712.1V737.2" stroke="#d0d0d0" stroke-width="1.9" fill="none"/><path d="M597 727.1L608 737.75L618.9 727.1" stroke="#fff" stroke-width="1.3" fill="none"/>
<path d="M742.6 716.4L736.9 721.4L742.6 726.6M737.2 721.4H753.1A6.22 6.22 0 0 1 753.1 733.85H743" stroke="#a6a6a6" stroke-width="1.3" fill="none"/>
<path d="M893.5 716.4L899.2 721.4L893.5 726.6M898.9 721.4H883A6.22 6.22 0 0 0 883 733.85H893" stroke="#a0a0a0" stroke-width="1.3" fill="none"/>
<rect x="1020.9" y="717.9" width="20.2" height="20.2" fill="#fff"/>
<rect x="1017.4" y="714.4" width="21.1" height="21.2" fill="#fff" stroke="#777" stroke-width=".9"/>
<rect x="1014.4" y="711.4" width="21.2" height="21.1" fill="#fff" stroke="#777" stroke-width=".9"/>
<text x="1025" y="726.9" font-family="'Liberation Sans',sans-serif" font-size="12" font-weight="bold" text-anchor="middle" fill="#111">1</text>
<path d="M1155.6 725H1181" stroke="#d0d0d0" stroke-width="1.9" fill="none"/><path d="M1165.85 714.3L1155.1 725L1165.85 735.7" stroke="#fff" stroke-width="1.3" fill="none"/>
<g fill="#999">
<path d="M388.9 776L402.7 768.2V783.9Z"/><circle cx="559.1" cy="776" r="6.9"/><rect x="713.5" y="768.2" width="15" height="15.2" rx="1.3"/>
<path d="M876.3 770.1H879.9L881 768.2H885L886.1 770.1H889.6A1 1 0 0 1 890.6 771.1V781A1 1 0 0 1 889.6 782H876.3A1 1 0 0 1 875.3 781V771.1A1 1 0 0 1 876.3 770.1Z"/>
</g>
<circle cx="882.9" cy="776" r="2.9" fill="none" stroke="#000" stroke-width="1.7"/>
</g>
</svg>
</div>
</body>
</html>
